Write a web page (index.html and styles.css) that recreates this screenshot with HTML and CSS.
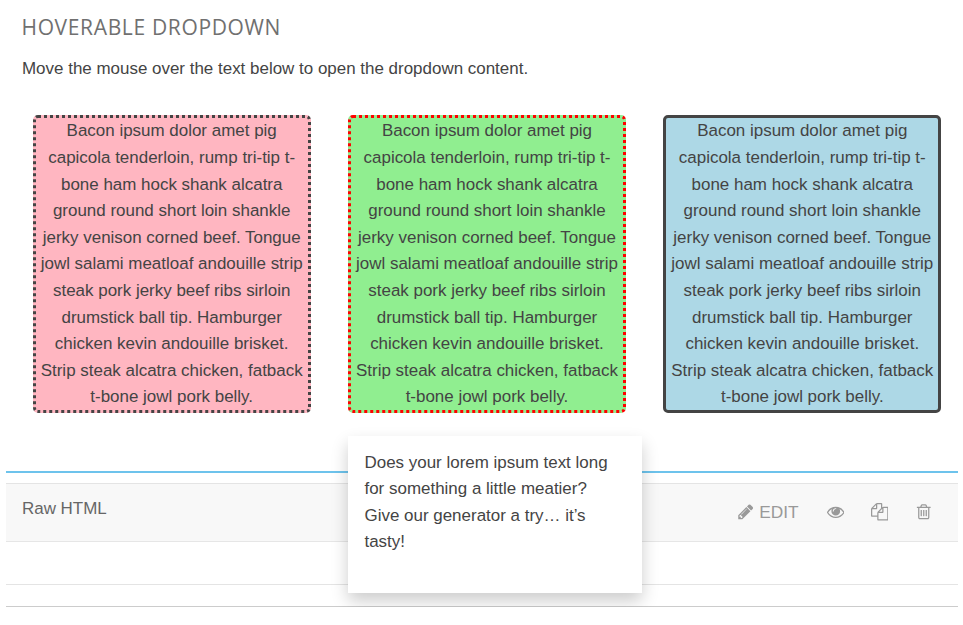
FILE: index.html
```html
<!DOCTYPE html>
<html lang="en">
<head>
    <meta charset="UTF-8">
    <meta name="viewport" content="width=device-width, initial-scale=1.0">
    <title>Hoverable Dropdown</title>

    <link rel="stylesheet" href="styles.css">
</head>
<body>
    <main class="content">
        <h2>Hoverable Dropdown</h2>
        <p class="intro">Move the mouse over the text below to open the dropdown content.</p>

        <div class="columns">
            <div class="box pink">Bacon ipsum dolor amet pig<br>capicola tenderloin, rump tri-tip t-<br>bone ham hock shank alcatra<br>ground round short loin shankle<br>jerky venison corned beef. Tongue<br>jowl salami meatloaf andouille strip<br>steak pork jerky beef ribs sirloin<br>drumstick ball tip. Hamburger<br>chicken kevin andouille brisket.<br>Strip steak alcatra chicken, fatback<br>t-bone jowl pork belly.</div>
            <div class="dropdown">
                <div class="box green">Bacon ipsum dolor amet pig<br>capicola tenderloin, rump tri-tip t-<br>bone ham hock shank alcatra<br>ground round short loin shankle<br>jerky venison corned beef. Tongue<br>jowl salami meatloaf andouille strip<br>steak pork jerky beef ribs sirloin<br>drumstick ball tip. Hamburger<br>chicken kevin andouille brisket.<br>Strip steak alcatra chicken, fatback<br>t-bone jowl pork belly.</div>
                <div class="dropdown-content">
                    <p>Does your lorem ipsum text long<br>for something a little meatier?<br>Give our generator a try… it’s<br>tasty!</p>
                </div>
            </div>
            <div class="box blue">Bacon ipsum dolor amet pig<br>capicola tenderloin, rump tri-tip t-<br>bone ham hock shank alcatra<br>ground round short loin shankle<br>jerky venison corned beef. Tongue<br>jowl salami meatloaf andouille strip<br>steak pork jerky beef ribs sirloin<br>drumstick ball tip. Hamburger<br>chicken kevin andouille brisket.<br>Strip steak alcatra chicken, fatback<br>t-bone jowl pork belly.</div>
        </div>
    </main>

    <section class="block">
        <div class="block-header">
            <span class="block-title">Raw HTML</span>
            <div class="actions">
                <a class="edit">
                    <svg class="icon" viewBox="0 0 1792 1792"><path d="M491 1536l91-91-235-235-91 91v107h128v128h107zm523-928q0-22-22-22-10 0-17 7l-542 542q-7 7-7 17 0 22 22 22 10 0 17-7l542-542q7-7 7-17zm-54-192l416 416-832 832h-416v-416l832-832zm683 96q0 53-37 90l-166 166-416-416 166-165q36-38 90-38 53 0 91 38l235 234q37 39 37 91z"/></svg>
                    <span>EDIT</span>
                </a>
                <svg class="icon" viewBox="0 0 1792 1792"><path d="M1664 960q-152-236-381-353 61 104 61 225 0 185-131.500 316.500t-316.500 131.500-316.500-131.500-131.500-316.500q0-121 61-225-229 117-381 353 133 205 333.500 326.500t434.500 121.500 434.500-121.500 333.500-326.500zm-720-384q0-20-14-34t-34-14q-125 0-214.500 89.500t-89.500 214.500q0 20 14 34t34 14 34-14 14-34q0-86 61-147t147-61q20 0 34-14t14-34zm848 384q0 34-20 69-140 230-376.500 368.500t-499.500 138.500-499.500-139-376.500-368q-20-35-20-69t20-69q140-229 376.500-368t499.500-139 499.500 139 376.500 368q20 35 20 69z"/></svg>
                <svg class="icon" viewBox="0 0 1792 1792"><path d="M1696 384q40 0 68 28t28 68v1216q0 40-28 68t-68 28h-960q-40 0-68-28t-28-68v-288h-544q-40 0-68-28t-28-68v-672q0-40 20-88t48-76l408-408q28-28 76-48t88-20h416q40 0 68 28t28 68v328q68-40 128-40h416zm-544 213l-299 299h299v-299zm-640-384l-299 299h299v-299zm196 647l316-316v-416h-384v416q0 40-28 68t-68 28h-416v640h512v-256q0-40 20-88t48-76zm956 804v-1152h-384v416q0 40-28 68t-68 28h-416v640h896z"/></svg>
                <svg class="icon" viewBox="0 0 1792 1792"><path d="M704 736v576q0 14-9 23t-23 9h-64q-14 0-23-9t-9-23v-576q0-14 9-23t23-9h64q14 0 23 9t9 23zm256 0v576q0 14-9 23t-23 9h-64q-14 0-23-9t-9-23v-576q0-14 9-23t23-9h64q14 0 23 9t9 23zm256 0v576q0 14-9 23t-23 9h-64q-14 0-23-9t-9-23v-576q0-14 9-23t23-9h64q14 0 23 9t9 23zm128 724v-948h-896v948q0 22 7 40.500t14.500 27 10.500 8.500h832q3 0 10.500-8.500t14.500-27 7-40.500zm-672-1076h448l-48-117q-7-9-17-11h-317q-10 2-17 11zm928 32v64q0 14-9 23t-23 9h-96v948q0 83-47 143.500t-113 60.500h-832q-66 0-113-58.500t-47-141.500v-952h-96q-14 0-23-9t-9-23v-64q0-14 9-23t23-9h309l70-167q15-37 54-63t79-26h320q40 0 79 26t54 63l70 167h309q14 0 23 9t9 23z"/></svg>
            </div>
        </div>
        <div class="block-body"></div>
        <div class="block-footer"></div>
    </section>
</body>
</html>
```

FILE: styles.css
```css
* {
    box-sizing: border-box;
}
body {
    margin: 0;
    padding: 0 5px 0 6px;
    font-family: "Liberation Sans", Arial, sans-serif;
    font-size: 16.97px;
    line-height: 26.6px;
    color: #444;
    background: white;
}
.content {
    height: 473px;
    padding: 13px 16px 0;
    border-bottom: 2px solid #6dc3ec;
}
h2 {
    margin: 0 0 0 -0.5px;
    font-family: "Open Sans", sans-serif;
    font-size: 21px;
    font-weight: 400;
    line-height: 28px;
    letter-spacing: 0.65px;
    text-transform: uppercase;
    color: #707070;
}
.intro {
    margin: 15px 0 0;
}
.columns {
    display: grid;
    grid-template-columns: repeat(3, 278px);
    column-gap: 37.3px;
    margin: 32px 0 0 10.7px;
}
.box {
    height: 298px;
    padding-top: 0.8px;
    border: 3px dotted #444;
    border-radius: 5px;
    text-align: center;
    white-space: nowrap;
}
.pink {
    background-color: lightpink;
}
.green {
    background-color: lightgreen;
    border-color: red;
}
.blue {
    background-color: lightblue;
    border-style: solid;
}
.dropdown {
    position: relative;
}
.dropdown-content {
    position: absolute;
    top: 321px;
    left: 0;
    z-index: 1; /* Opens over the block below */
    width: 294px;
    height: 157px;
    padding: 14px 16.5px;
    background-color: white;
    box-shadow: 0 8px 16px rgba(0, 0, 0, 0.2);
}
.dropdown-content p {
    margin: 0;
}
.block {
    margin-top: 10px;
    border-bottom: 1px solid #ccc;
}
.block-header {
    display: flex;
    justify-content: space-between;
    height: 59px;
    padding: 11px 26px 0 16px;
    background-color: #f8f8f8;
    border-top: 1px solid #e4e4e4;
    border-bottom: 1px solid #e6e6e6;
}
.block-title {
    padding-top: 1px;
    color: #666;
}
.actions {
    display: flex;
    align-items: center;
    gap: 26.3px;
    height: 34px;
    color: #999;
}
.edit {
    display: flex;
    align-items: center;
    gap: 5px;
    margin-right: 2px;
    font-size: 17.3px;
}
.icon {
    width: 17.5px;
    height: 17.5px;
    fill: #999;
}
.block-body {
    height: 43px;
    border-bottom: 1px solid #e4e4e4;
}
.block-footer {
    height: 21px;
}
```
